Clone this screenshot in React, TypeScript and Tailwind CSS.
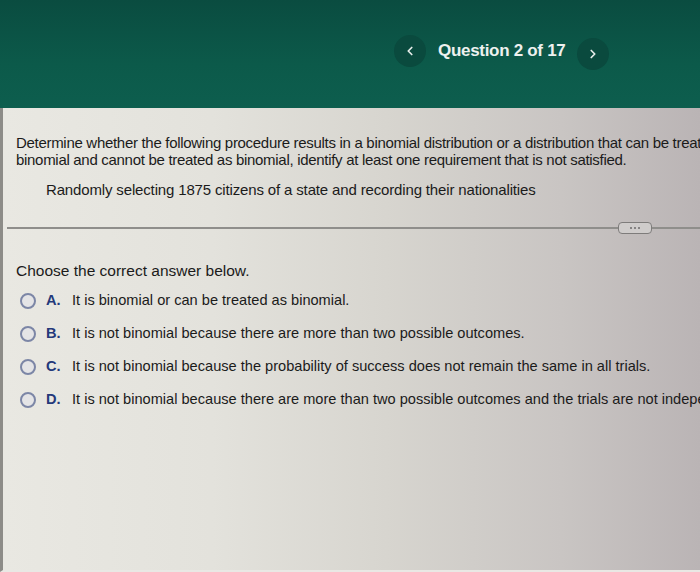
import { ChevronLeft, ChevronRight } from 'lucide-react'

const options = [
  { letter: 'A.', text: 'It is binomial or can be treated as binomial.' },
  { letter: 'B.', text: 'It is not binomial because there are more than two possible outcomes.' },
  { letter: 'C.', text: 'It is not binomial because the probability of success does not remain the same in all trials.' },
  {
    letter: 'D.',
    text: 'It is not binomial because there are more than two possible outcomes and the trials are not independent.',
  },
]

export default function App() {
  return (
    <div className="flex h-[572px] w-[700px] flex-col overflow-hidden font-['Liberation_Sans',Arial,sans-serif] text-[#1b1b1b]">
      {/* header bar */}
      <div className="flex h-[108px] shrink-0 items-start bg-[linear-gradient(180deg,#0a4c40_0%,#0c5a4a_60%,#0d5e4e_100%)] pl-[394px] pt-[32px]">
        <div className="flex items-center">
          <div className="flex h-[32px] w-[32px] items-center justify-center rounded-full bg-[#0a4a3e]">
            <ChevronLeft className="h-[14px] w-[14px] text-[#e6ece9]" strokeWidth={3} />
          </div>
          <span className="ml-[12px] text-[17px] font-bold tracking-[-0.3px] text-[#eef1ef]">Question 2 of 17</span>
          <div className="ml-[12px] mt-[6px] flex h-[32px] w-[32px] items-center justify-center rounded-full bg-[#0a4a3e]">
            <ChevronRight className="h-[14px] w-[14px] text-[#e6ece9]" strokeWidth={3} />
          </div>
        </div>
      </div>

      {/* question body */}
      <div className="flex flex-1 flex-col border-l-[3px] border-b-[2px] border-l-[#8d8c88] border-b-[#e9e8e4] bg-[linear-gradient(90deg,#e9e8e2_0%,#e3e2dc_30%,#d7d5cf_55%,#c9c5c3_80%,#bab4b5_100%)]">
        <div className="whitespace-nowrap pl-[13px] pt-[26px] text-[15px] leading-[17px] tracking-[-0.3px]">
          <p>Determine whether the following procedure results in a binomial distribution or a distribution that can be treated as</p>
          <p>binomial and cannot be treated as binomial, identify at least one requirement that is not satisfied.</p>
          <p className="pl-[30px] pt-[13px] tracking-[-0.15px]">Randomly selecting 1875 citizens of a state and recording their nationalities</p>
        </div>

        <div className="mt-[24px] flex items-center pl-[4px]">
          <div className="h-[1.5px] w-[611px] bg-[#8f8e8b]" />
          <div className="flex h-[12px] w-[34px] items-center justify-center gap-[2px] rounded-[4px] border border-[#7e7c7b] bg-[#cfcccb]">
            <span className="h-[2px] w-[2px] rounded-full bg-[#6d6b6b]" />
            <span className="h-[2px] w-[2px] rounded-full bg-[#6d6b6b]" />
            <span className="h-[2px] w-[2px] rounded-full bg-[#6d6b6b]" />
          </div>
          <div className="h-[1.5px] flex-1 bg-[#8f8e8b]" />
        </div>

        <p className="pl-[13px] pt-[28px] text-[15.5px] leading-[18px]">Choose the correct answer below.</p>

        <div className="flex flex-col gap-[16px] pl-[17px] pt-[12px]">
          {options.map((o) => (
            <div key={o.letter} className="flex items-center whitespace-nowrap text-[14.6px] leading-[17px]">
              <span className="h-[16px] w-[16px] shrink-0 rounded-full border-[2px] border-[#7c86a6] bg-[#e4e4e6]" />
              <span className="ml-[10px] w-[26px] shrink-0 font-bold text-[#24397a]">{o.letter}</span>
              <span>{o.text}</span>
            </div>
          ))}
        </div>
      </div>
    </div>
  )
}
